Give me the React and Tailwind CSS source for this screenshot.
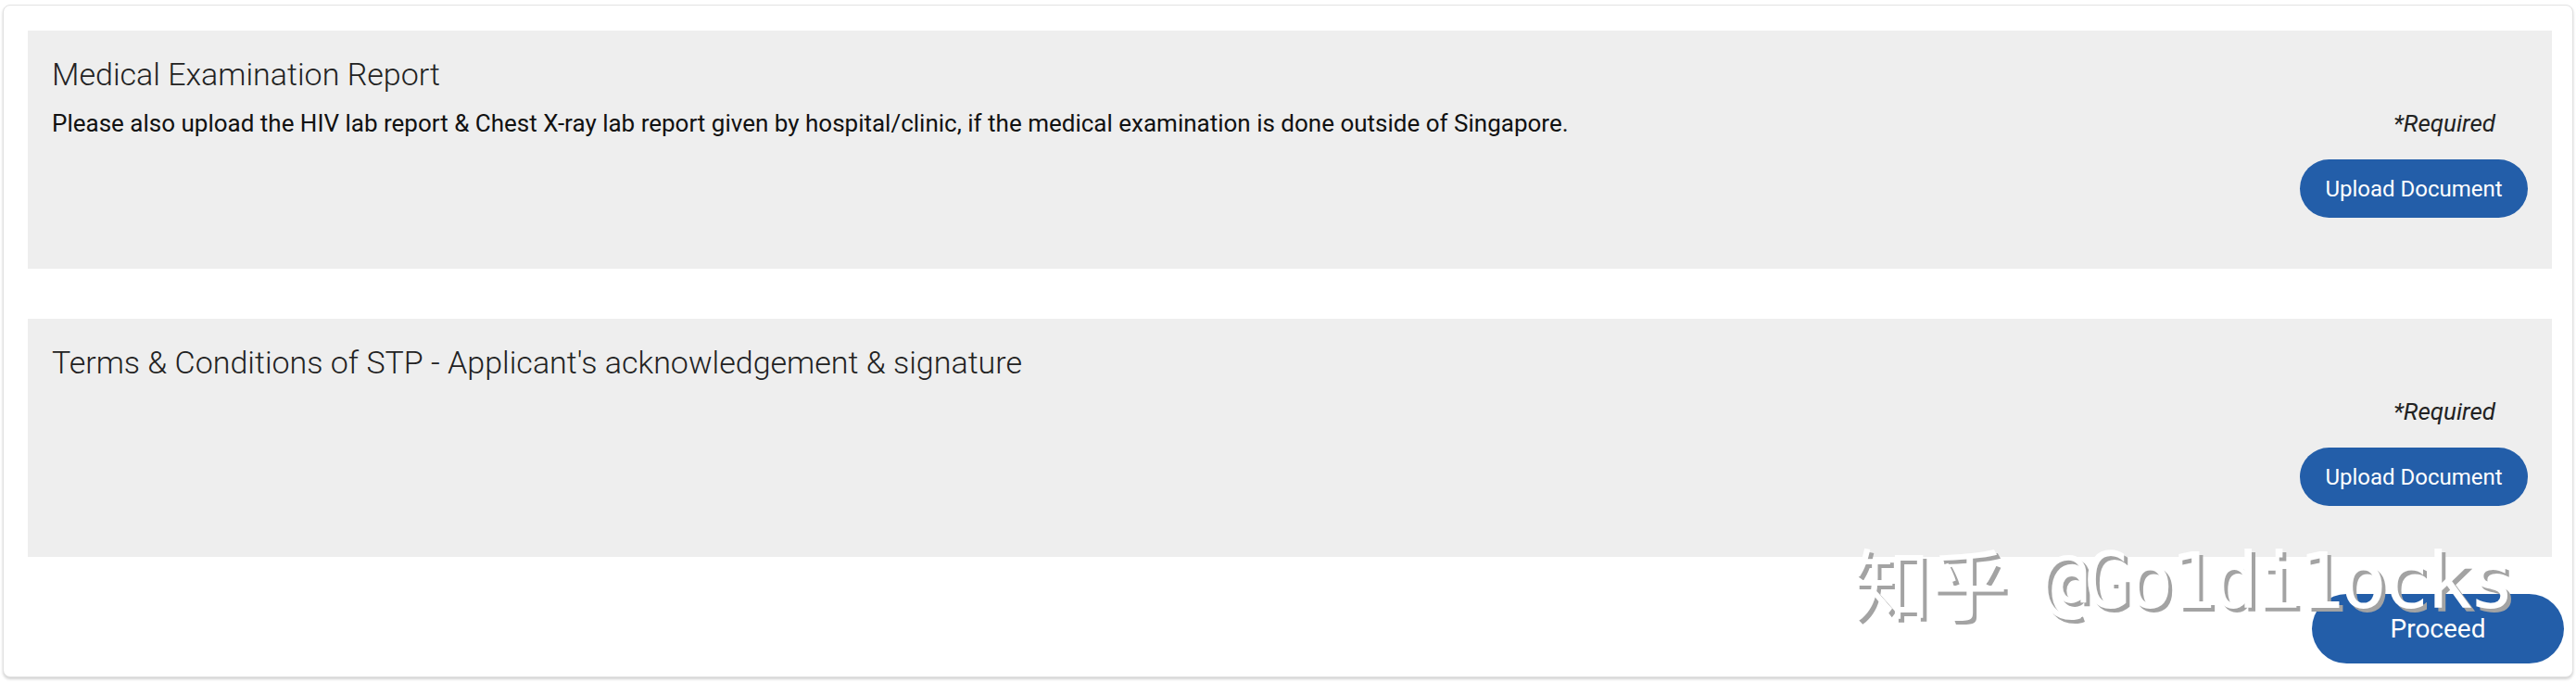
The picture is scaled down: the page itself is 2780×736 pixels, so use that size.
import React from 'react';

const sections = [
  {
    id: 'medical',
    title: 'Medical Examination Report',
    note: 'Please also upload the HIV lab report & Chest X-ray lab report given by hospital/clinic, if the medical examination is done outside of Singapore.',
  },
  {
    id: 'terms',
    title: "Terms & Conditions of STP - Applicant's acknowledgement & signature",
    note: '',
  },
];

const DocumentSection = ({ title, note, first }) => (
  <div className={`bg-[#eeeeee] px-[26px] pt-[27px] pb-[55px] ${first ? '' : 'mt-[54px]'}`}>
    <h2 className="text-[34px] leading-[41px] font-light text-[#222222]">{title}</h2>
    <div className="mt-[14px] flex items-start justify-between gap-8">
      <p className="text-[26px] leading-[36px] text-[#111111]">{note}</p>
      <div className="flex flex-col items-end shrink-0">
        <span className="mr-[35px] text-[26px] leading-[36px] italic text-[#222222]">*Required</span>
        <button className="mt-[21px] h-[63px] w-[246px] rounded-full bg-[#235ea9] text-[24px] text-white">
          Upload Document
        </button>
      </div>
    </div>
  </div>
);

const App = () => {
  return (
    <div className="relative w-[2780px] h-[736px] bg-white px-[3px] pt-[5px] font-['Roboto','Liberation_Sans',sans-serif]">
      <div className="rounded-[8px] border border-[#e2e2e2] bg-white pl-[26px] pr-[22px] pt-[27px] pb-[14px] shadow-[0_2px_3px_rgba(0,0,0,0.18)]">
        {sections.map((s, i) => (
          <DocumentSection key={s.id} title={s.title} note={s.note} first={i === 0} />
        ))}
        <div className="mt-[40px] flex justify-end -mr-[13px]">
          <button className="h-[75px] w-[272px] rounded-full bg-[#235ea9] text-[28px] text-white">
            Proceed
          </button>
        </div>
      </div>

      {/* watermark */}
      <div className="pointer-events-none absolute left-[1999px] top-[572px] flex items-center text-white [text-shadow:4px_4px_0_#a3a3a3]">
        <span className="text-[84px] leading-[110px] font-['Noto_Sans_CJK_SC',sans-serif]">知乎</span>
        <span className="ml-[36px] text-[84px] leading-[110px] tracking-[-4.5px] font-['DejaVu_Sans_Mono',monospace]">@Go1di1ocks</span>
      </div>
    </div>
  );
};

export default App;
